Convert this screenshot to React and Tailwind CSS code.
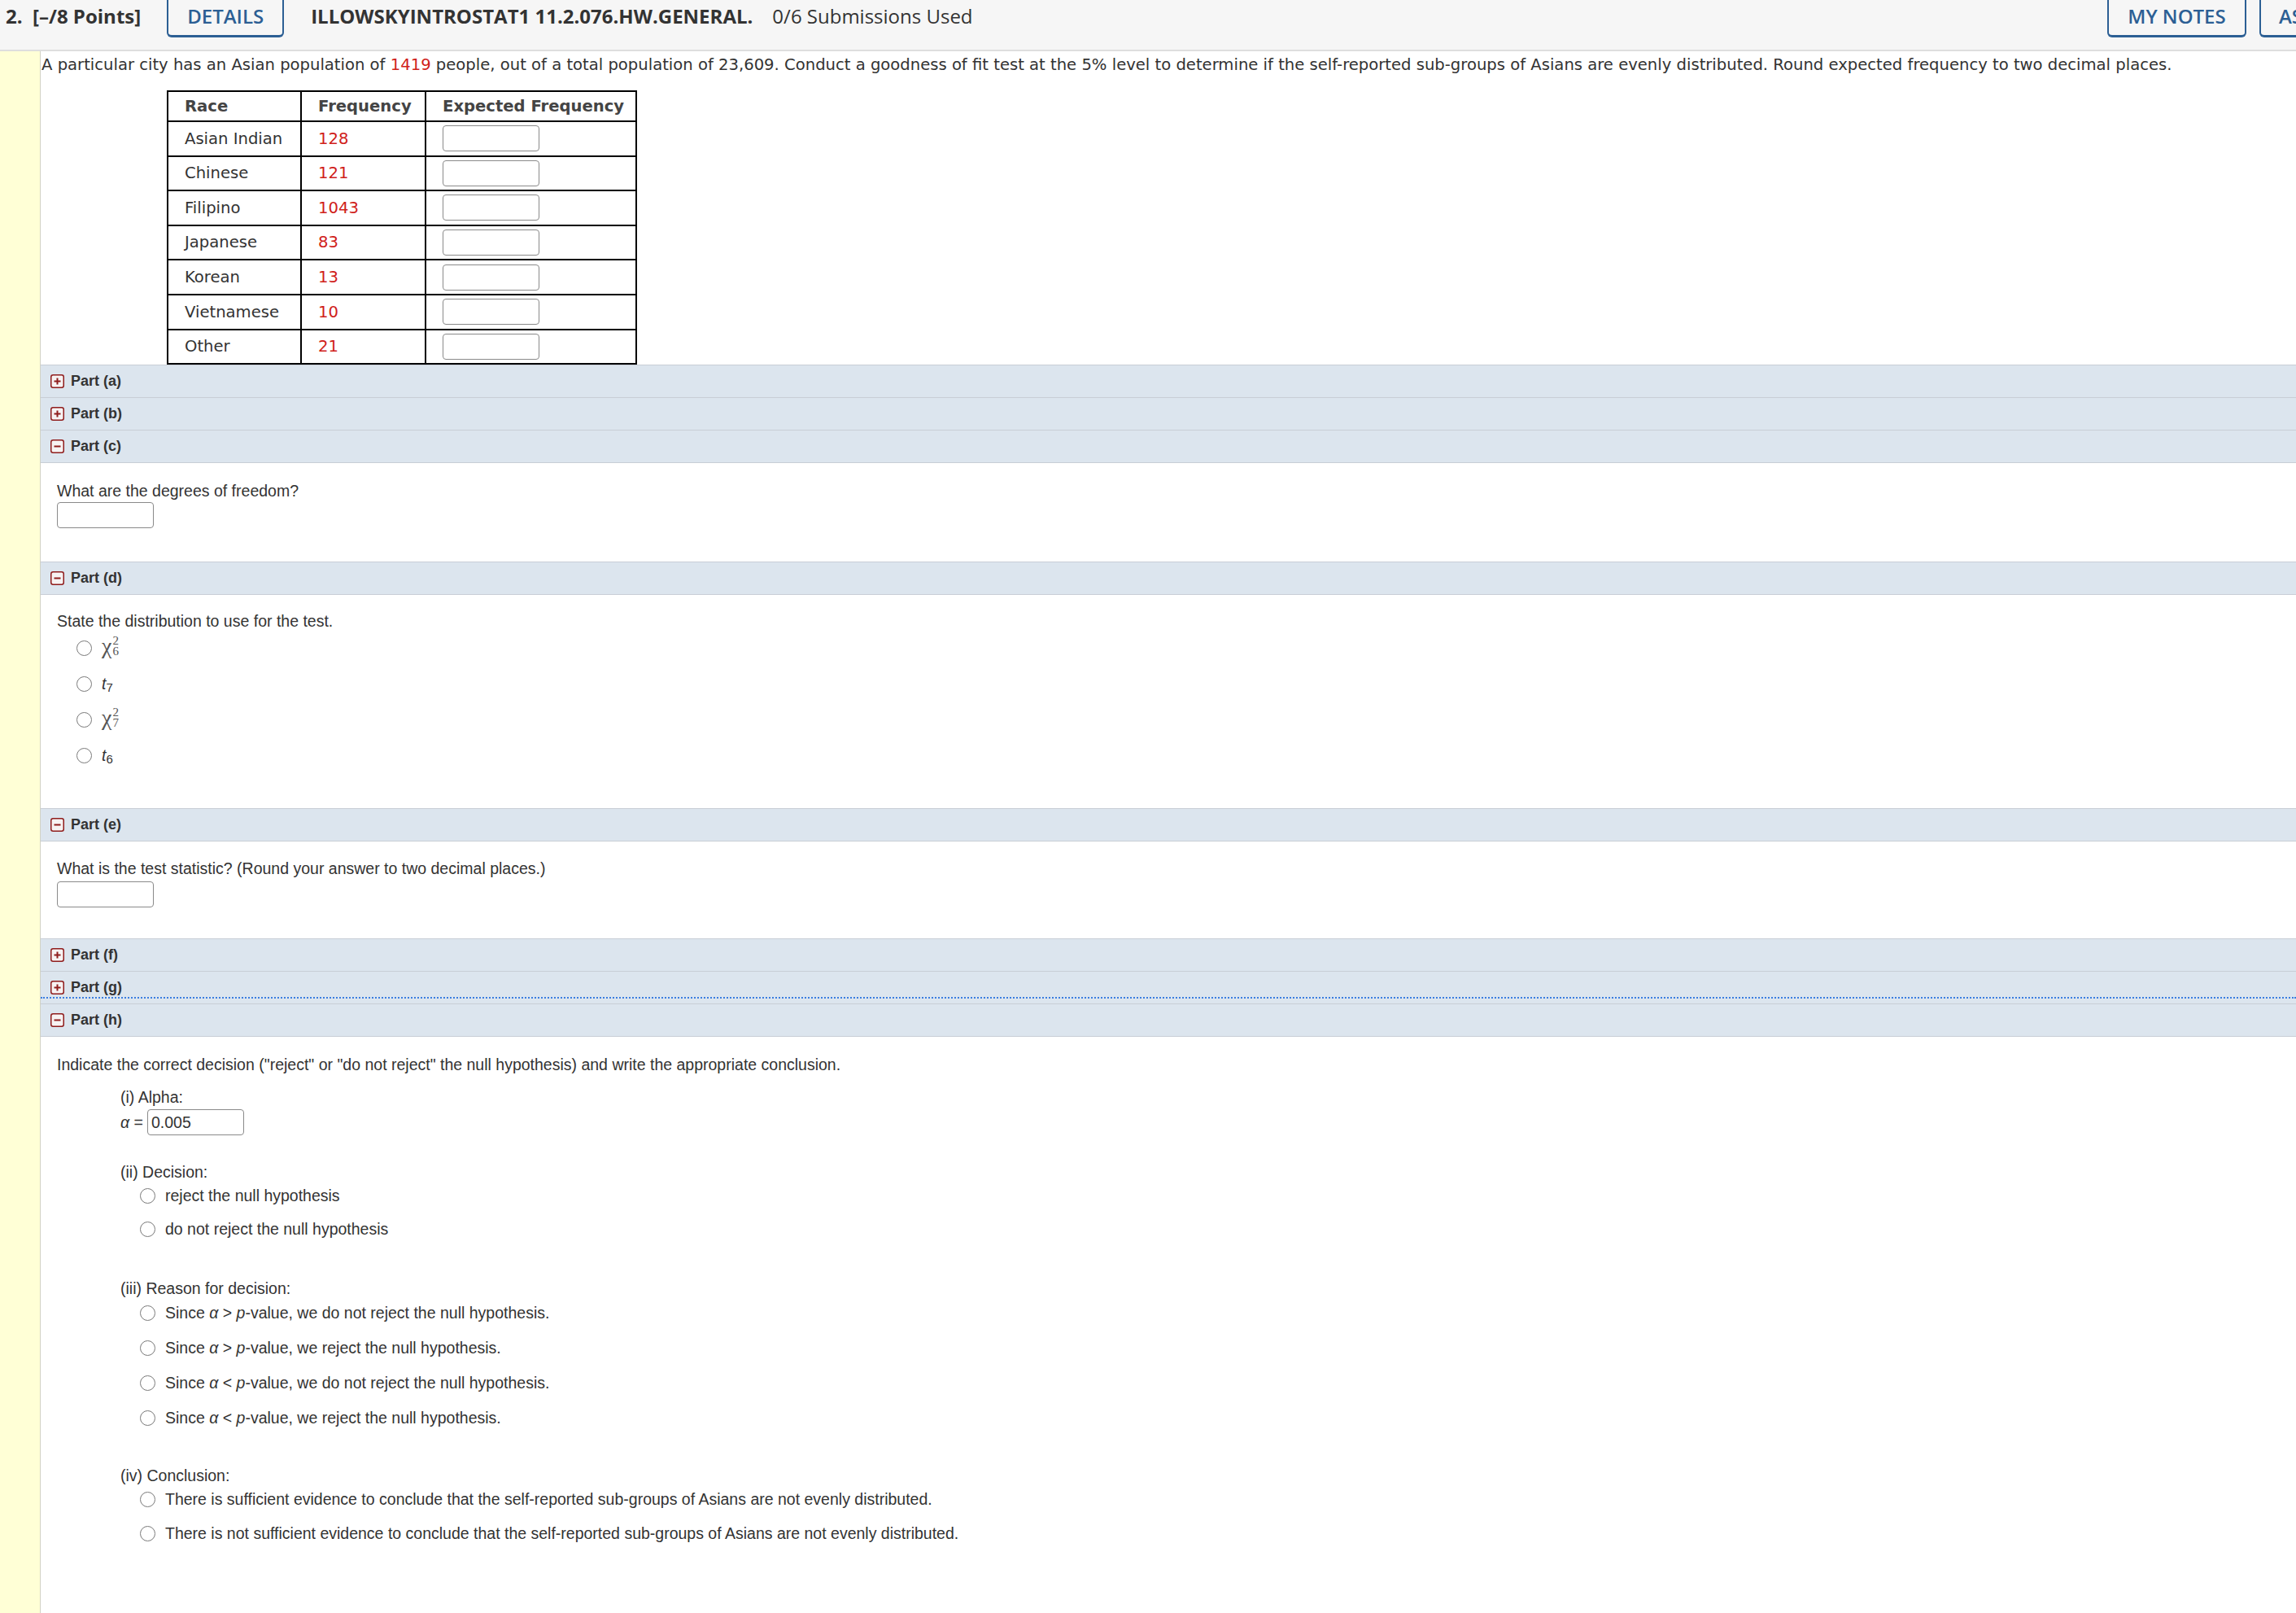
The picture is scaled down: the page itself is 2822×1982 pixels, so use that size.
import React from "react";

const sans = "font-['Liberation_Sans',Arial,sans-serif]";
const verdana = "font-['DejaVu_Sans',Verdana,sans-serif]";
const serif = "font-['Liberation_Serif','Times_New_Roman',serif]";

const rows = [
  ["Asian Indian", "128"],
  ["Chinese", "121"],
  ["Filipino", "1043"],
  ["Japanese", "83"],
  ["Korean", "13"],
  ["Vietnamese", "10"],
  ["Other", "21"],
];

const ToggleIcon = ({ open }) => (
  <svg width="17" height="17" viewBox="0 0 17 17" className="shrink-0">
    <rect x="0.75" y="0.75" width="15.5" height="15.5" rx="2.5" fill="#f7f3f3" stroke="#8f1d1d" strokeWidth="1.5" />
    <line x1="4.5" y1="8.5" x2="12.5" y2="8.5" stroke="#8f1d1d" strokeWidth="2" />
    {!open && <line x1="8.5" y1="4.5" x2="8.5" y2="12.5" stroke="#8f1d1d" strokeWidth="2" />}
  </svg>
);

const PartBar = ({ label, open, focus }) => (
  <div className="relative flex h-[40px] items-center gap-[8px] border-t border-[#c8ced6] bg-[#dce5ee] pl-[12px]">
    <ToggleIcon open={open} />
    <span className={`${sans} text-[18px] font-bold text-[#333]`}>Part ({label})</span>
    {focus && <div className="absolute left-0 right-0 bottom-[6px] border-b-2 border-dotted border-[#3b7ee0]" />}
  </div>
);

const Radio = () => (
  <span className="inline-block h-[19px] w-[19px] shrink-0 rounded-full border border-[#7a7a7a] bg-white" />
);

const Option = ({ children }) => (
  <div className="flex h-[24px] items-center gap-[12px]">
    <Radio />
    <span>{children}</span>
  </div>
);

const TextBox = ({ value, className = "" }) => (
  <div className={`h-[32px] w-[119px] rounded-[4px] border border-[#8a8a8a] bg-white px-[4px] leading-[30px] ${className}`}>
    {value}
  </div>
);

const Chi = ({ df }) => (
  <span className={`inline-flex items-center ${serif} text-[#555]`}>
    <span className="text-[28px] leading-[26px]">χ</span>
    <span className="ml-[1px] inline-flex flex-col text-[15px] leading-[13px]">
      <span>2</span>
      <span>{df}</span>
    </span>
  </span>
);

const T = ({ df }) => (
  <span>
    <i>t</i>
    <sub className="text-[15px]">{df}</sub>
  </span>
);

const Alpha = () => <i>α</i>;
const P = () => <i>p</i>;

export default function App() {
  return (
    <div className="flex min-h-screen flex-col bg-white">
      <header className="flex h-[63px] shrink-0 items-start overflow-hidden border-b-2 border-[#dedede] bg-[#f6f6f6] font-['Open_Sans',sans-serif] text-[24px] text-[#333]">
        <span className="ml-[7px] whitespace-nowrap font-bold leading-[40px]">2.&nbsp; [–/8 Points]</span>
        <div className="ml-[32px] flex h-[46px] w-[144px] shrink-0 items-center justify-center rounded-b-[6px] border-x-2 border-b-[3px] border-[#2c5f94] pb-[4px] font-semibold text-[#2c5f94]">
          DETAILS
        </div>
        <span className="ml-[33px] whitespace-nowrap font-bold leading-[40px]">ILLOWSKYINTROSTAT1 11.2.076.HW.GENERAL.</span>
        <span className="ml-[24px] whitespace-nowrap leading-[40px]">0/6 Submissions Used</span>
        <div className="flex-1" />
        <div className="flex h-[46px] w-[171px] shrink-0 items-center justify-center rounded-b-[6px] border-x-2 border-b-[3px] border-[#2c5f94] pb-[4px] font-semibold text-[#2c5f94]">
          MY NOTES
        </div>
        <div className="ml-[16px] -mr-[240px] flex h-[46px] w-[285px] shrink-0 items-center justify-start rounded-b-[6px] border-x-2 border-b-[3px] border-[#2c5f94] pb-[4px] pl-[22px] font-semibold text-[#2c5f94]">
          ASK YOUR TEACHER
        </div>
      </header>

      <div className="flex flex-1">
        <div className="w-[50px] shrink-0 border-r border-[#d2d2c4] bg-[#ffffd6]" />

        <main className="flex-1 overflow-hidden">
          {/* question */}
          <p className={`${verdana} whitespace-nowrap pl-[1px] pt-[4px] text-[19.6px] leading-[26px] text-[#333]`}>
            A particular city has an Asian population of <span className="text-[#d0211a]">1419</span> people, out of a
            total population of 23,609. Conduct a goodness of fit test at the 5% level to determine if the self-reported
            sub-groups of Asians are evenly distributed. Round expected frequency to two decimal places.
          </p>

          <table className={`${verdana} ml-[155px] mt-[18px] w-[578px] table-fixed border-collapse border-2 border-black text-left text-[19.6px] text-[#333]`}>
            <thead>
              <tr className="h-[37px]">
                <th className="w-[164px] border-2 border-black pl-[20px] font-bold text-[#444]">Race</th>
                <th className="w-[153px] border-2 border-black pl-[20px] font-bold text-[#444]">Frequency</th>
                <th className="border-2 border-black pl-[20px] font-bold text-[#444]">Expected Frequency</th>
              </tr>
            </thead>
            <tbody>
              {rows.map(([race, freq]) => (
                <tr key={race} className="h-[42.6px]">
                  <td className="border-2 border-black pl-[20px]">{race}</td>
                  <td className="border-2 border-black pl-[20px] text-[#d0211a]">{freq}</td>
                  <td className="border-2 border-black pl-[20px]">
                    <TextBox />
                  </td>
                </tr>
              ))}
            </tbody>
          </table>

          <div className={`${sans} text-[19.5px] text-[#333]`}>
            <PartBar label="a" />
            <PartBar label="b" />
            <PartBar label="c" open />
            <div className="border-t border-[#c8ced6] pb-[41px] pl-[20px] pt-[22px]">
              <div className="leading-[24px]">What are the degrees of freedom?</div>
              <TextBox className="mt-[2px]" />
            </div>

            <PartBar label="d" open />
            <div className="border-t border-[#c8ced6] pb-[53px] pl-[20px] pt-[20px]">
              <div className="leading-[24px]">State the distribution to use for the test.</div>
              <div className="ml-[24px] mt-[9px] flex flex-col gap-[20px]">
                <Option><Chi df="6" /></Option>
                <Option><T df="7" /></Option>
                <Option><Chi df="7" /></Option>
                <Option><T df="6" /></Option>
              </div>
            </div>

            <PartBar label="e" open />
            <div className="border-t border-[#c8ced6] pb-[38px] pl-[20px] pt-[21px]">
              <div className="leading-[24px]">What is the test statistic? (Round your answer to two decimal places.)</div>
              <TextBox className="mt-[4px]" />
            </div>

            <PartBar label="f" />
            <PartBar label="g" focus />
            <PartBar label="h" open />
            <div className="border-t border-[#c8ced6] pb-[60px] pl-[20px] pt-[22px]">
              <div className="leading-[24px]">
                Indicate the correct decision ("reject" or "do not reject" the null hypothesis) and write the appropriate
                conclusion.
              </div>
              <div className="ml-[78px]">
                <div className="mt-[16px] leading-[24px]">(i) Alpha:</div>
                <div className="mt-[3px] flex items-center gap-[5px]">
                  <span>
                    <Alpha /> =
                  </span>
                  <TextBox value="0.005" />
                </div>

                <div className="mt-[33px] leading-[24px]">(ii) Decision:</div>
                <div className="ml-[24px] mt-[5px] flex flex-col gap-[17px]">
                  <Option>reject the null hypothesis</Option>
                  <Option>do not reject the null hypothesis</Option>
                </div>

                <div className="mt-[49px] leading-[24px]">(iii) Reason for decision:</div>
                <div className="ml-[24px] mt-[6px] flex flex-col gap-[19px]">
                  <Option>
                    Since <Alpha /> &gt; <P />-value, we do not reject the null hypothesis.
                  </Option>
                  <Option>
                    Since <Alpha /> &gt; <P />-value, we reject the null hypothesis.
                  </Option>
                  <Option>
                    Since <Alpha /> &lt; <P />-value, we do not reject the null hypothesis.
                  </Option>
                  <Option>
                    Since <Alpha /> &lt; <P />-value, we reject the null hypothesis.
                  </Option>
                </div>

                <div className="mt-[47px] leading-[24px]">(iv) Conclusion:</div>
                <div className="ml-[24px] mt-[5px] flex flex-col gap-[18px]">
                  <Option>
                    There is sufficient evidence to conclude that the self-reported sub-groups of Asians are not evenly
                    distributed.
                  </Option>
                  <Option>
                    There is not sufficient evidence to conclude that the self-reported sub-groups of Asians are not
                    evenly distributed.
                  </Option>
                </div>
              </div>
            </div>
          </div>
        </main>
      </div>
    </div>
  );
}
